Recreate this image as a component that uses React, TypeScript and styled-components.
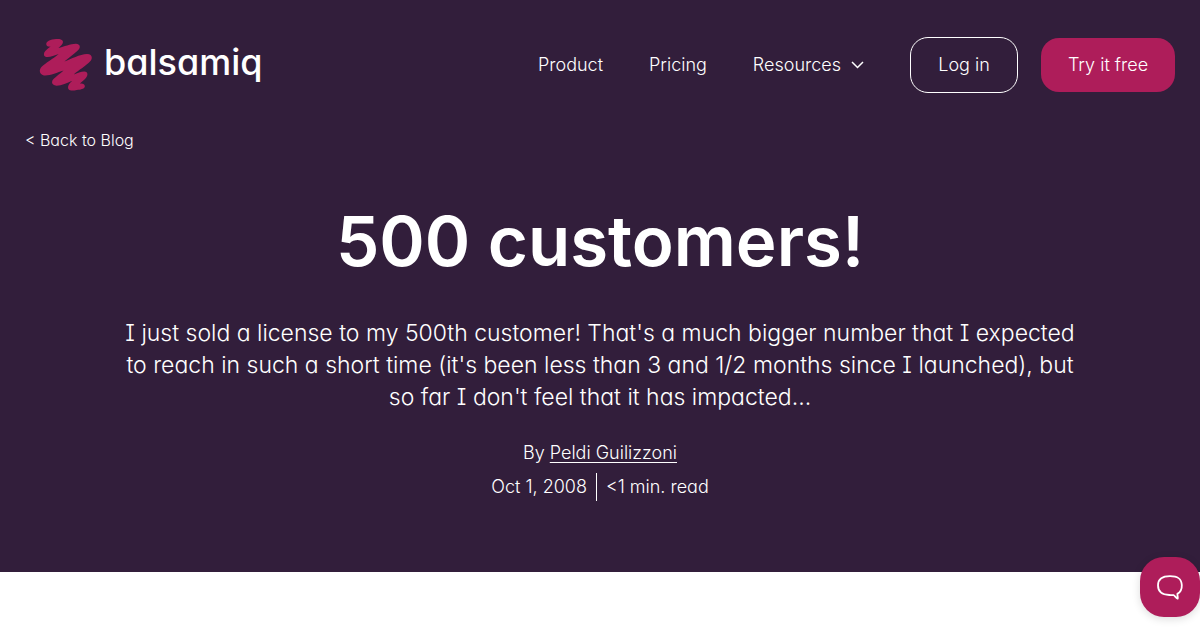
import React from "react";
import styled, { createGlobalStyle, css } from "styled-components";

const colors = {
  plum: "#321e3b",
  berry: "#ae1d5a",
  white: "#ffffff",
};

const GlobalStyle = createGlobalStyle`
  *, *::before, *::after { box-sizing: border-box; }
  body {
    margin: 0;
    background: ${colors.white};
    color: ${colors.white};
    font-family: Inter, "Liberation Sans", sans-serif;
    font-feature-settings: "cv11", "cv08";
    font-weight: 300;
    font-size: 18px;
    line-height: 28px;
  }
`;

const Banner = styled.div`
  background: ${colors.plum};
  padding: 37px 25px 71px;
`;

const Header = styled.header`
  display: flex;
  align-items: center;
  justify-content: space-between;
`;

const Logo = styled.a`
  display: flex;
  align-items: center;
  gap: 12px;
  margin-left: 14px;
  color: inherit;
  text-decoration: none;
`;

const Wordmark = styled.span`
  font-size: 36px;
  line-height: 46px;
  font-weight: 500;
  padding-bottom: 6px;
`;

const Nav = styled.nav`
  display: flex;
  align-items: center;
  gap: 46px;
`;

const navItem = css`
  font: inherit;
  font-feature-settings: inherit;
  color: inherit;
  text-decoration: none;
  white-space: nowrap;
`;

const NavLink = styled.a`
  ${navItem}
`;

const NavToggle = styled.button`
  ${navItem}
  display: flex;
  align-items: center;
  gap: 10px;
  padding: 0;
  border: 0;
  background: none;
`;

const Actions = styled.div`
  display: flex;
  align-items: center;
  gap: 23px;
`;

const Action = styled.a<{ $filled?: boolean }>`
  ${navItem}
  display: flex;
  align-items: center;
  justify-content: center;
  width: ${(p) => (p.$filled ? 134 : 108)}px;
  height: ${(p) => (p.$filled ? 54 : 56)}px;
  border: ${(p) => (p.$filled ? "0" : `1px solid ${colors.white}`)};
  border-radius: 18px;
  background: ${(p) => (p.$filled ? colors.berry : "transparent")};
`;

const BackLink = styled.a`
  display: inline-block;
  margin-top: 35px;
  font-size: 16px;
  line-height: 24px;
  color: inherit;
  text-decoration: none;
`;

const Article = styled.main`
  display: flex;
  flex-direction: column;
  align-items: center;
  max-width: 950px;
  margin: 42px auto 0;
  text-align: center;
`;

const Title = styled.h1`
  margin: 0;
  font-size: 69px;
  line-height: 90px;
  font-weight: 600;
`;

const Summary = styled.p`
  margin: 31px 0 0;
  font-size: 23px;
  line-height: 32px;
`;

const Byline = styled.p`
  margin: 26px 0 6px;
`;

const AuthorLink = styled.a`
  color: inherit;
  text-underline-offset: 3px;
  text-decoration-thickness: 1px;
`;

const Meta = styled.div`
  display: flex;
`;

const ReadTime = styled.span`
  margin-left: 9px;
  padding-left: 9px;
  border-left: 1px solid ${colors.white};
`;

const ChatButton = styled.button`
  position: fixed;
  right: 0;
  bottom: 10px;
  display: flex;
  align-items: center;
  justify-content: center;
  width: 60px;
  height: 60px;
  padding: 0;
  border: 0;
  border-radius: 24px;
  background: ${colors.berry};
  box-shadow: 0 2px 8px rgba(0, 0, 0, 0.14);
`;

const Scribble = () => (
  <svg width="53" height="53" viewBox="0 0 53 53" aria-hidden="true">
    <path
      fill={colors.berry}
      d="M8.5 7.3C5.8 5.1 7.6 2.1 11.5 1C14.8 .2 19.4 -.2 21.8 .4C24.6 1.3 24.5 3.7 22.6 6L19.5 9.1C25 7.7 31.5 4.8 36.8 4.8C41.6 5.1 42 8.7 38.5 11.7C34.5 15.3 29.2 19 25.4 22.6C32.5 20.1 40.5 15.3 48 15.1C52.7 15 54.3 18.7 51.2 22.3C47.2 26.8 39.6 31.1 34.7 35.6C38.3 34.4 42 32.5 45.2 32.5C48.8 32.7 49.2 35.4 47.4 38.2C45.8 40.7 43.1 42.3 40.9 44.6C43.6 44 46.2 45.2 45.8 47.7C45.3 50.1 41.2 50.5 37.8 51C34.6 51.6 31 52.1 29.6 50.2C28.4 48.5 29.3 46 31 44L33.2 41.7C28 43.8 22.8 46.5 17.6 46.7C12.8 46.6 11.8 43 14.5 40.1C17.4 37.2 21.3 34.5 24.6 31.5C17.8 33.7 10.2 37.1 4.9 36.4C.7 35.7 -.5 31.4 2.4 28.1C6.4 23.7 14.5 19.5 19.6 14.9C15.4 16.1 10.7 18.6 7.1 17.9C4.4 17.2 4.3 14.3 6.3 12C8 10.2 9.9 8.9 11.5 7.6C10.5 7.7 9.5 7.8 8.5 7.3Z"
    />
  </svg>
);

const Chevron = () => (
  <svg width="13" height="8" viewBox="0 0 13 8" aria-hidden="true">
    <path d="M1 1l5.5 5.5L12 1" fill="none" stroke="currentColor" strokeWidth="1.5" />
  </svg>
);

const ChatIcon = () => (
  <svg width="28" height="28" viewBox="0 0 28 28" aria-hidden="true">
    <path
      d="M21.4 20.9C25 18.8 26 16 25.8 12C25.4 5.3 21.5 3.2 14 3.2C6.2 3.2 2.1 5.6 2 12.3C2 19 6 21.8 13.3 22C15.5 22.1 17 21.9 17.7 22.2C18.7 22.7 20 24.7 21.7 25.6C22.1 24.5 21.3 22.4 21.4 20.9Z"
      fill="none"
      stroke={colors.white}
      strokeWidth="1.8"
      strokeLinejoin="round"
    />
  </svg>
);

export default function App() {
  return (
    <>
      <GlobalStyle />
      <Banner>
        <Header>
          <Logo href="#">
            <Scribble />
            <Wordmark>balsamiq</Wordmark>
          </Logo>
          <Nav aria-label="Main">
            <NavLink href="#product">Product</NavLink>
            <NavLink href="#pricing">Pricing</NavLink>
            <NavToggle type="button" aria-haspopup="true">
              Resources
              <Chevron />
            </NavToggle>
            <Actions>
              <Action href="#login">Log in</Action>
              <Action href="#try" $filled>
                Try it free
              </Action>
            </Actions>
          </Nav>
        </Header>
        <BackLink href="#blog">&lt; Back to Blog</BackLink>
        <Article>
          <Title>500 customers!</Title>
          <Summary>
            I just sold a license to my 500th customer! That's a much bigger number that I expected
            to reach in such a short time (it's been less than 3 and 1/2 months since I launched),
            but so far I don't feel that it has impacted...
          </Summary>
          <Byline>
            By <AuthorLink href="#author">Peldi Guilizzoni</AuthorLink>
          </Byline>
          <Meta>
            <time dateTime="2008-10-01">Oct 1, 2008</time>
            <ReadTime>&lt;1 min. read</ReadTime>
          </Meta>
        </Article>
      </Banner>
      <ChatButton type="button" aria-label="Open chat">
        <ChatIcon />
      </ChatButton>
    </>
  );
}
